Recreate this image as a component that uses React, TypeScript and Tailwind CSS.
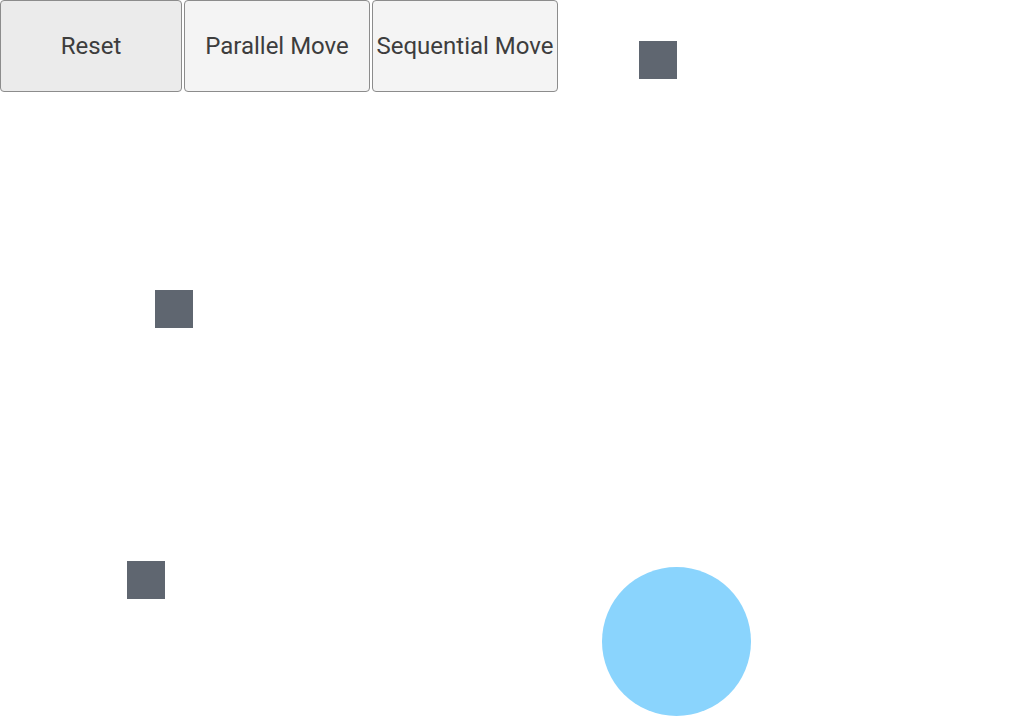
import React from 'react';

const buttonBase =
    "h-[92px] shrink-0 rounded-[4px] border border-[#8c8c8c] text-[24px] leading-none text-[#3d3d3d] flex items-center justify-center";

const Square: React.FC<{ className: string }> = ({ className }) => (
    <div className={`absolute w-[38px] h-[38px] bg-[#5f6670] ${className}`} />
);

const App: React.FC = () => {
    return (
        <div className="relative w-[1026px] h-[718px] overflow-hidden bg-white font-['Roboto',sans-serif]">
            <div className="flex gap-[2px]">
                <button className={`${buttonBase} w-[182px] bg-[#ebebeb]`}>Reset</button>
                <button className={`${buttonBase} w-[186px] bg-[#f4f4f4]`}>Parallel Move</button>
                <button className={`${buttonBase} w-[186px] bg-[#f4f4f4]`}>Sequential Move</button>
            </div>

            {/* moving pieces on the canvas */}
            <Square className="left-[639px] top-[41px]" />
            <Square className="left-[155px] top-[290px]" />
            <Square className="left-[127px] top-[561px]" />
            <div className="absolute left-[602px] top-[567px] w-[149px] h-[149px] rounded-full bg-[#8ad4fd]" />
        </div>
    );
};

export default App;
